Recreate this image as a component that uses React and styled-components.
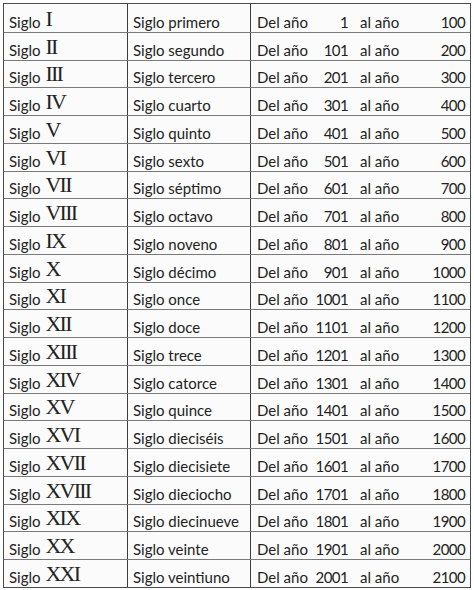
import React from 'react';
import styled, { createGlobalStyle } from 'styled-components';

const GlobalStyle = createGlobalStyle`
  html, body {
    margin: 0;
    padding: 0;
    background: #ffffff;
  }
  body {
    padding: 3px;
  }
`;

const ROMAN = [
  'I', 'II', 'III', 'IV', 'V', 'VI', 'VII', 'VIII', 'IX', 'X', 'XI',
  'XII', 'XIII', 'XIV', 'XV', 'XVI', 'XVII', 'XVIII', 'XIX', 'XX', 'XXI',
];

const NAMES = [
  'primero', 'segundo', 'tercero', 'cuarto', 'quinto', 'sexto', 'séptimo',
  'octavo', 'noveno', 'décimo', 'once', 'doce', 'trece', 'catorce', 'quince',
  'dieciséis', 'diecisiete', 'dieciocho', 'diecinueve', 'veinte', 'veintiuno',
];

const Table = styled.div`
  box-sizing: border-box;
  width: 468px;
  height: 585px;
  border: 1px solid #4a4a4a;
  background: #fbfbfb;
  display: grid;
  grid-template-rows: repeat(21, 1fr);
  font-family: Lato, 'Open Sans', sans-serif;
  font-size: 15px;
  color: #222222;
`;

const Row = styled.div`
  display: grid;
  grid-template-columns: 123px 123px 1fr;
  border-top: ${(p) => (p.$first ? 'none' : '1px solid #7a7a7a')};
  min-height: 0;
`;

const Cell = styled.div`
  box-sizing: border-box;
  display: flex;
  align-items: flex-end;
  padding: 0 0 2px ${(p) => p.$pad || 5}px;
  border-left: ${(p) => (p.$line ? '1px solid #3c3c3c' : 'none')};
  white-space: nowrap;
  line-height: 1;
`;

const Roman = styled.span`
  font-family: 'Liberation Serif', 'Times New Roman', serif;
  font-size: 22px;
  letter-spacing: -1.8px;
  margin-left: 5px;
  line-height: 1;
`;

const Label = styled.span`
  width: 46px;
`;

const Year = styled.span`
  text-align: right;
  letter-spacing: -0.6px;
  width: ${(p) => p.$w || 45}px;
  padding-right: ${(p) => p.$pr || 0}px;
`;

const Gap = styled.span`
  padding-left: 12px;
  flex: 1;
`;

const App = () => (
  <>
    <GlobalStyle />
    <Table>
      {ROMAN.map((r, i) => (
        <Row key={r} $first={i === 0}>
          <Cell>
            Siglo<Roman>{r}</Roman>
          </Cell>
          <Cell $line>Siglo {NAMES[i]}</Cell>
          <Cell $line $pad={6}>
            <Label>Del año</Label>
            <Year>{i * 100 + 1}</Year>
            <Gap>al año</Gap>
            <Year $w={40} $pr={5}>{(i + 1) * 100}</Year>
          </Cell>
        </Row>
      ))}
    </Table>
  </>
);

export default App;
